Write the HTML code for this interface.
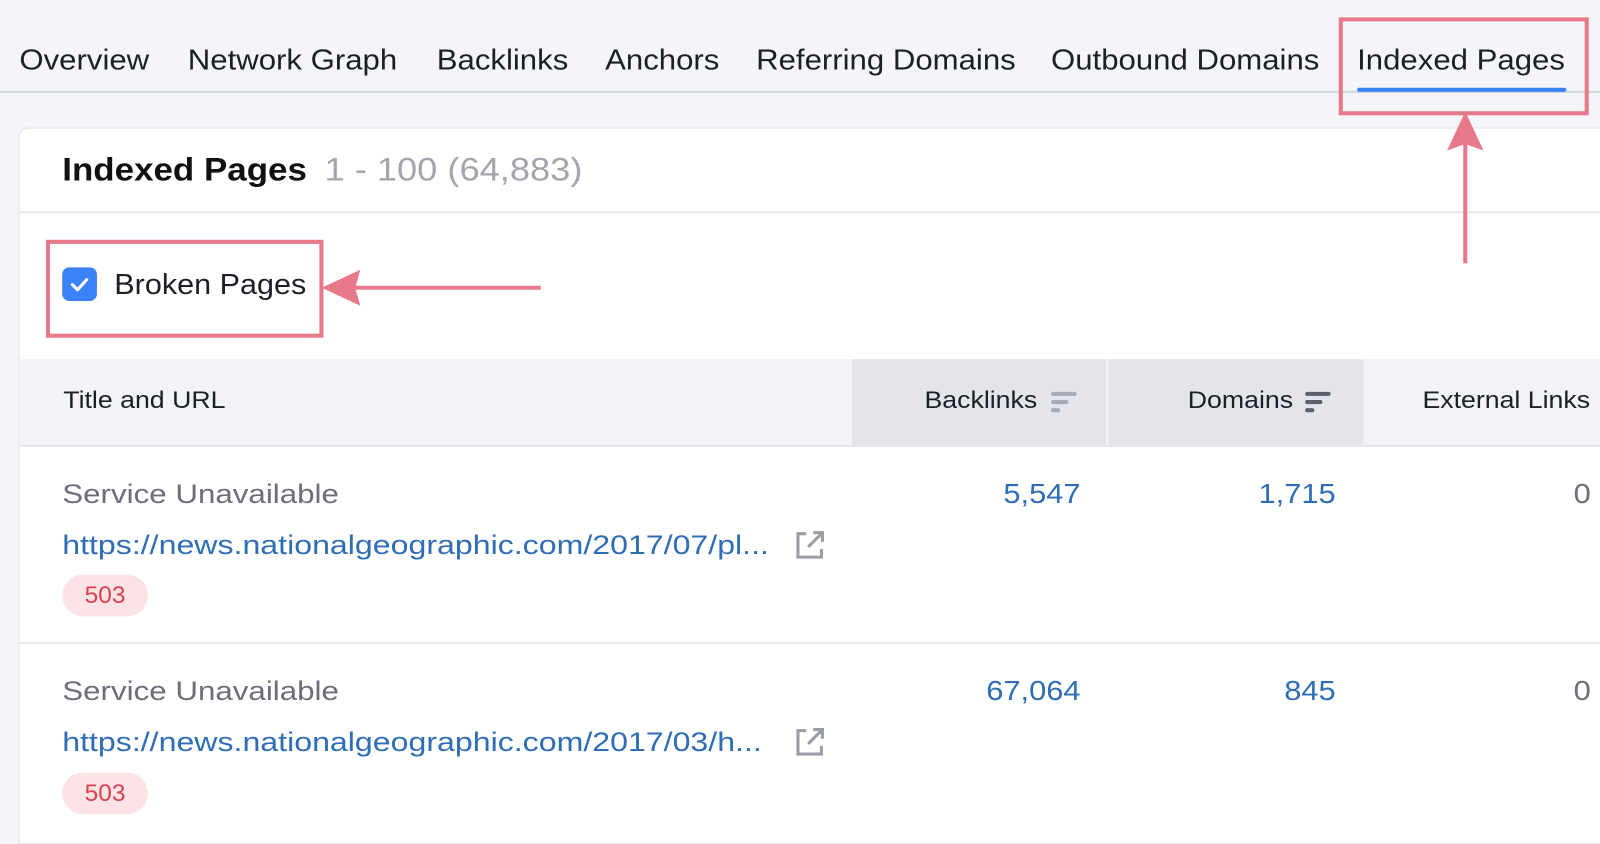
<!DOCTYPE html>
<html><head><style>
body{margin:0;width:1600px;height:832px;overflow:hidden;background:#f4f5f9;font-family:"Liberation Sans",sans-serif;}
#w{position:absolute;left:0;top:0;width:1568px;height:816px;transform:scale(1.0204);transform-origin:0 0;}
.a{position:absolute;white-space:nowrap;transform-origin:0 0;}
.tab{font-size:28px;color:#1d1f26;top:43px;transform:scaleX(1.09);}
.n{font-size:27px;color:#2f6db5;text-align:right;transform:scaleX(1.12);transform-origin:100% 0;}
.t{font-size:26px;color:#6c6e79;transform:scaleX(1.18);}
.u{font-size:26px;color:#2f6db5;transform:scaleX(1.21);}
.b{background:#fde3e5;color:#d9424e;font-size:24px;width:84px;height:41px;border-radius:21px;text-align:center;line-height:41px;}
.h{font-size:24px;color:#1d1f26;top:379px;transform:scaleX(1.09);}
</style></head><body><div id="w">
<div class="a" style="left:0;top:89px;width:1568px;height:2px;background:#d3d5dc"></div>
<div class="a tab" style="left:19px">Overview</div>
<div class="a tab" style="left:184px">Network Graph</div>
<div class="a tab" style="left:428px">Backlinks</div>
<div class="a tab" style="left:593px">Anchors</div>
<div class="a tab" style="left:741px">Referring Domains</div>
<div class="a tab" style="left:1030px">Outbound Domains</div>
<div class="a tab" style="left:1330px">Indexed Pages</div>
<div class="a" style="left:1330px;top:86px;width:205px;height:4px;background:#3a82f7;border-radius:2px"></div>
<div class="a" style="left:18px;top:125px;width:1560px;height:700px;background:#fff;border:1px solid #e2e4e9;border-radius:10px 0 0 0"></div>
<div class="a" style="left:61px;top:148px;font-size:32px;font-weight:bold;color:#111;transform:scaleX(1.07)">Indexed Pages</div>
<div class="a" style="left:318px;top:148px;font-size:32px;color:#a3a5ad;transform:scaleX(1.11)">1 - 100 (64,883)</div>
<div class="a" style="left:19px;top:207px;width:1560px;height:2px;background:#e6e7ec"></div>
<div class="a" style="left:61px;top:262px;width:34px;height:33px;background:#3a82f7;border-radius:7px"><svg width="34" height="33"><path d="M10 17 L15 22 L24 12" stroke="#fff" stroke-width="3" fill="none" stroke-linecap="round" stroke-linejoin="round"/></svg></div>
<div class="a" style="left:112px;top:263px;font-size:28px;color:#1d1f26;transform:scaleX(1.07)">Broken Pages</div>
<div class="a" style="left:19px;top:352px;width:1560px;height:84px;background:#f2f3f7;border-bottom:2px solid #e4e5ea"></div>
<div class="a" style="left:835px;top:352px;width:249px;height:84px;background:#e4e5eb"></div>
<div class="a" style="left:1086px;top:352px;width:250px;height:84px;background:#e4e5eb"></div>
<div class="a h" style="left:62px">Title and URL</div>
<div class="a h" style="left:906px">Backlinks</div>
<svg class="a" style="left:1030px;top:383px" width="26" height="22"><g stroke="#a9abb4" stroke-width="4" stroke-linecap="round"><path d="M2 3H23M2 11H15M2 19H7"/></g></svg>
<div class="a h" style="left:1164px">Domains</div>
<svg class="a" style="left:1279px;top:383px" width="26" height="22"><g stroke="#5d6069" stroke-width="4" stroke-linecap="round"><path d="M2 3H23M2 11H15M2 19H7"/></g></svg>
<div class="a h" style="left:1394px">External Links</div>
<div class="a t" style="left:61px;top:469px">Service Unavailable</div>
<div class="a u" style="left:61px;top:519px">https://news.nationalgeographic.com/2017/07/pl...</div>
<svg class="a" style="left:778px;top:518px" width="32" height="32"><g stroke="#9b9da6" stroke-width="3" fill="none"><path d="M12 5H4V28H27V20"/><path d="M14 18L28 4M19 4H28V13"/></g></svg>
<div class="a b" style="left:61px;top:563px">503</div>
<div class="a n" style="left:900px;top:469px;width:159px">5,547</div>
<div class="a n" style="left:1150px;top:469px;width:159px">1,715</div>
<div class="a n" style="left:1400px;top:469px;width:159px;color:#6c6e79">0</div>
<div class="a" style="left:19px;top:629px;width:1560px;height:2px;background:#e6e7ec"></div>
<div class="a t" style="left:61px;top:662px">Service Unavailable</div>
<div class="a u" style="left:61px;top:712px">https://news.nationalgeographic.com/2017/03/h...</div>
<svg class="a" style="left:778px;top:711px" width="32" height="32"><g stroke="#9b9da6" stroke-width="3" fill="none"><path d="M12 5H4V28H27V20"/><path d="M14 18L28 4M19 4H28V13"/></g></svg>
<div class="a b" style="left:61px;top:757px">503</div>
<div class="a n" style="left:900px;top:662px;width:159px">67,064</div>
<div class="a n" style="left:1150px;top:662px;width:159px">845</div>
<div class="a n" style="left:1400px;top:662px;width:159px;color:#6c6e79">0</div>
<div class="a" style="left:1312px;top:17px;width:237px;height:88px;border:4px solid #e8798b"></div>
<div class="a" style="left:45px;top:235px;width:264px;height:88px;border:4px solid #e8798b"></div>
<svg class="a" style="left:0;top:0" width="1568" height="816"><g fill="#e8798b" stroke="#e8798b" stroke-width="4"><path d="M530 282H340" fill="none"/><path d="M320 282L350 268L346 282L350 296Z"/><path d="M1436 258V135" fill="none"/><path d="M1436 114L1422 144L1436 139L1450 144Z"/></g></svg>
</div></body></html>
